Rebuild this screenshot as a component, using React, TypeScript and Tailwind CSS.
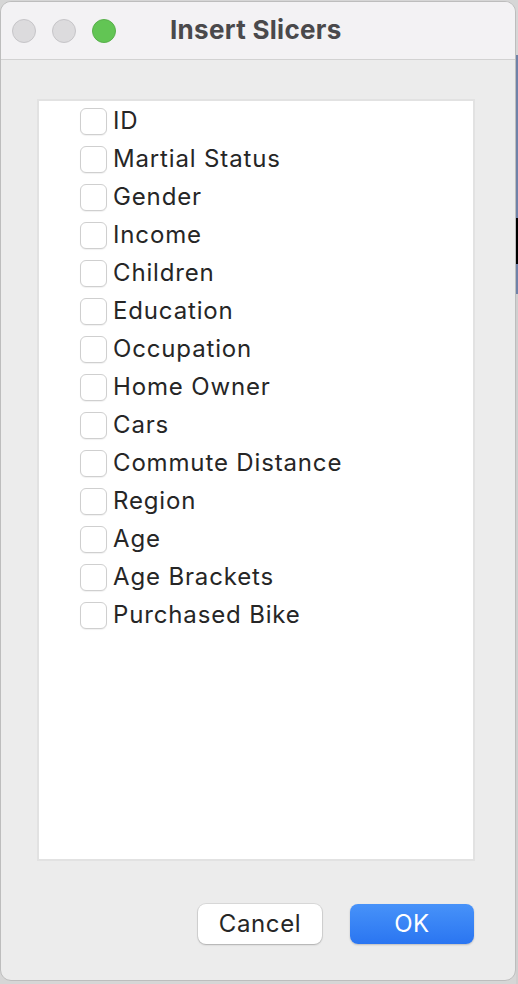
const fields = [
  "ID",
  "Martial Status",
  "Gender",
  "Income",
  "Children",
  "Education",
  "Occupation",
  "Home Owner",
  "Cars",
  "Commute Distance",
  "Region",
  "Age",
  "Age Brackets",
  "Purchased Bike",
];

export default function App() {
  return (
    <div
      className="flex h-[984px] w-[518px] overflow-hidden bg-[#d6d6d6]"
      style={{ fontFamily: "Inter, 'Liberation Sans', sans-serif" }}
    >
      <div className="mt-px flex h-[980px] w-[516px] shrink-0 flex-col overflow-hidden rounded-[11px] border border-[#bdbdbd] bg-[#ececec]">
        {/* Title bar */}
        <header className="relative flex h-[58px] shrink-0 items-center border-b border-[#d2d2d2] bg-[#f3f2f4]">
          <div className="flex items-center gap-4 pl-[11px]">
            <span className="h-6 w-6 rounded-full border border-[#c6c5c8] bg-[#dcdbdd]" />
            <span className="h-6 w-6 rounded-full border border-[#c6c5c8] bg-[#dcdbdd]" />
            <span className="h-6 w-6 rounded-full border border-[#58b04b] bg-[#62c554]" />
          </div>
          <h1 className="mb-[2px] ml-[54px] text-[26px] font-bold tracking-[0.3px] text-[#4a494b]">Insert Slicers</h1>
        </header>

        {/* Field list */}
        <div className="flex flex-1 flex-col pl-[36px] pt-[39px]">
          <div className="h-[762px] w-[438px] border-2 border-[#e2e2e2] bg-white pt-px">
            {fields.map((f) => (
              <label key={f} className="flex h-[38px] items-center gap-[6px] pl-[41px]">
                <span className="h-[27px] w-[27px] rounded-[6px] border border-[#cfcfcf] bg-white shadow-[0_1px_1px_rgba(0,0,0,0.06)]" />
                <span className="text-[24px] leading-none tracking-[0.85px] text-[#262626]">{f}</span>
              </label>
            ))}
          </div>

          <div className="mt-[43px] flex w-[438px] justify-end gap-7 pr-px">
            <button className="h-[40px] w-[124px] rounded-[8px] bg-white text-[24px] tracking-[0.6px] text-[#262626] shadow-[0_0_0_1px_rgba(0,0,0,0.08),0_1px_2px_rgba(0,0,0,0.2)]">
              Cancel
            </button>
            <button className="h-[40px] w-[124px] rounded-[8px] bg-gradient-to-b from-[#4792f9] to-[#2a75f1] text-[24px] tracking-[0.6px] text-white shadow-[0_1px_2px_rgba(0,0,0,0.2)]">
              OK
            </button>
          </div>
        </div>
      </div>

      {/* Edge of the window behind */}
      <div className="flex w-[2px] flex-col">
        <div className="h-[55px] bg-[#d6d6d6]" />
        <div className="h-[163px] bg-[#6f82a8]" />
        <div className="h-[46px] bg-black" />
        <div className="h-[30px] bg-[#6f82a8]" />
        <div className="flex-1 bg-[#cfcfcf]" />
      </div>
    </div>
  );
}
